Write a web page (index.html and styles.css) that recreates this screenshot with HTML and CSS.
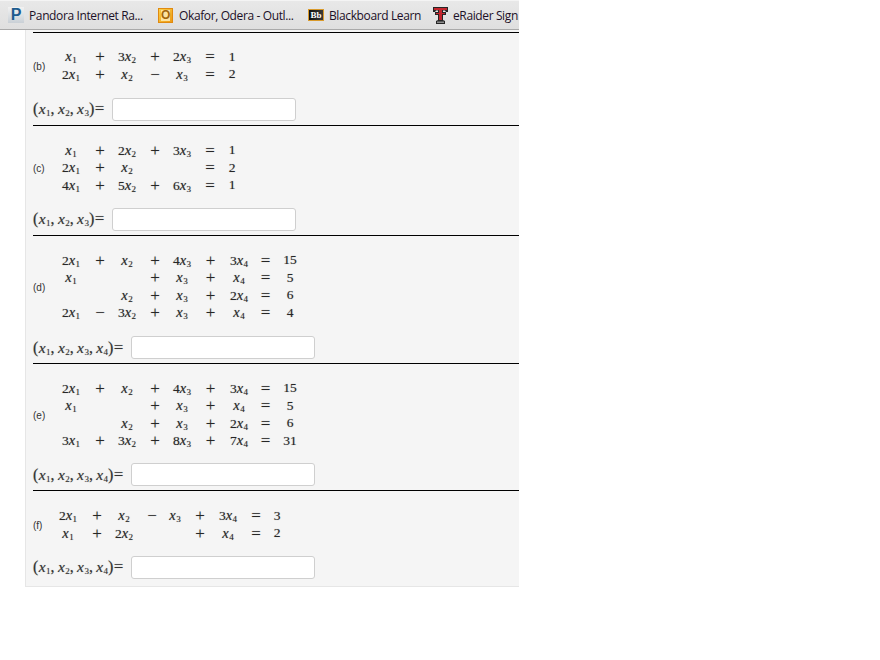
FILE: index.html
```html
<!DOCTYPE html>
<html lang="en">
<head>
<meta charset="utf-8">
<title>Linear systems</title>
<link rel="stylesheet" href="styles.css">
</head>
<body>
<div class="frame">
  <nav class="toolbar">
    <a class="bm bm-p"><span class="ico ico-p">P</span><span>Pandora Internet Ra...</span></a>
    <a class="bm bm-o"><span class="ico ico-o"><span>O</span></span><span>Okafor, Odera - Outl...</span></a>
    <a class="bm bm-b"><span class="ico ico-b">Bb</span><span>Blackboard Learn</span></a>
    <a class="bm bm-e"><svg class="ico-t" width="15" height="18" viewBox="0 0 15 18"><path d="M0 1h15v5h-2L12 4.500H10V6h3v3h-3v5l2 1v3H3v-3l2-1V9H2V6h3V4.500H3L2 6H0z" fill="#262626"/><path d="M1 2h13v2H1zM6 3h3v11H6zM3 7h9v1H3z" fill="#c4262e"/><path d="M4 15.500h7v1.500H4z" fill="#8d8d8d"/></svg><span>eRaider Sign</span></a>
  </nav>
  <main class="panel">
    <section class="q q-first">
      <div class="sys sys-b">
        <span class="lab">(b)</span>
        <div class="eqs">
          <i><var>x<sub>1</sub></var></i><i class="op">+</i><i>3<var>x<sub>2</sub></var></i><i class="op">+</i><i>2<var>x<sub>3</sub></var></i><i class="op">=</i><i>1</i>
          <i>2<var>x<sub>1</sub></var></i><i class="op">+</i><i><var>x<sub>2</sub></var></i><i class="op">−</i><i><var>x<sub>3</sub></var></i><i class="op">=</i><i>2</i>
        </div>
      </div>
      <div class="ans"><span class="tuple">(<var>x<sub>1</sub></var>,<var>x<sub>2</sub></var>,<var>x<sub>3</sub></var>)<b class="eq">=</b></span><input class="box" type="text"></div>
    </section>
    <section class="q q-c">
      <div class="sys sys-c">
        <span class="lab">(c)</span>
        <div class="eqs">
          <i><var>x<sub>1</sub></var></i><i class="op">+</i><i>2<var>x<sub>2</sub></var></i><i class="op">+</i><i>3<var>x<sub>3</sub></var></i><i class="op">=</i><i>1</i>
          <i>2<var>x<sub>1</sub></var></i><i class="op">+</i><i><var>x<sub>2</sub></var></i><i></i><i></i><i class="op">=</i><i>2</i>
          <i>4<var>x<sub>1</sub></var></i><i class="op">+</i><i>5<var>x<sub>2</sub></var></i><i class="op">+</i><i>6<var>x<sub>3</sub></var></i><i class="op">=</i><i>1</i>
        </div>
      </div>
      <div class="ans"><span class="tuple">(<var>x<sub>1</sub></var>,<var>x<sub>2</sub></var>,<var>x<sub>3</sub></var>)<b class="eq">=</b></span><input class="box" type="text"></div>
    </section>
    <section class="q">
      <div class="sys sys-d">
        <span class="lab">(d)</span>
        <div class="eqs">
          <i>2<var>x<sub>1</sub></var></i><i class="op">+</i><i><var>x<sub>2</sub></var></i><i class="op">+</i><i>4<var>x<sub>3</sub></var></i><i class="op">+</i><i>3<var>x<sub>4</sub></var></i><i class="op">=</i><i>15</i>
          <i><var>x<sub>1</sub></var></i><i></i><i></i><i class="op">+</i><i><var>x<sub>3</sub></var></i><i class="op">+</i><i><var>x<sub>4</sub></var></i><i class="op">=</i><i>5</i>
          <i></i><i></i><i><var>x<sub>2</sub></var></i><i class="op">+</i><i><var>x<sub>3</sub></var></i><i class="op">+</i><i>2<var>x<sub>4</sub></var></i><i class="op">=</i><i>6</i>
          <i>2<var>x<sub>1</sub></var></i><i class="op">−</i><i>3<var>x<sub>2</sub></var></i><i class="op">+</i><i><var>x<sub>3</sub></var></i><i class="op">+</i><i><var>x<sub>4</sub></var></i><i class="op">=</i><i>4</i>
        </div>
      </div>
      <div class="ans ans-4"><span class="tuple">(<var>x<sub>1</sub></var>,<var>x<sub>2</sub></var>,<var>x<sub>3</sub></var>,<var>x<sub>4</sub></var>)<b class="eq">=</b></span><input class="box" type="text"></div>
    </section>
    <section class="q q-e">
      <div class="sys sys-d">
        <span class="lab">(e)</span>
        <div class="eqs">
          <i>2<var>x<sub>1</sub></var></i><i class="op">+</i><i><var>x<sub>2</sub></var></i><i class="op">+</i><i>4<var>x<sub>3</sub></var></i><i class="op">+</i><i>3<var>x<sub>4</sub></var></i><i class="op">=</i><i>15</i>
          <i><var>x<sub>1</sub></var></i><i></i><i></i><i class="op">+</i><i><var>x<sub>3</sub></var></i><i class="op">+</i><i><var>x<sub>4</sub></var></i><i class="op">=</i><i>5</i>
          <i></i><i></i><i><var>x<sub>2</sub></var></i><i class="op">+</i><i><var>x<sub>3</sub></var></i><i class="op">+</i><i>2<var>x<sub>4</sub></var></i><i class="op">=</i><i>6</i>
          <i>3<var>x<sub>1</sub></var></i><i class="op">+</i><i>3<var>x<sub>2</sub></var></i><i class="op">+</i><i>8<var>x<sub>3</sub></var></i><i class="op">+</i><i>7<var>x<sub>4</sub></var></i><i class="op">=</i><i>31</i>
        </div>
      </div>
      <div class="ans ans-4"><span class="tuple">(<var>x<sub>1</sub></var>,<var>x<sub>2</sub></var>,<var>x<sub>3</sub></var>,<var>x<sub>4</sub></var>)<b class="eq">=</b></span><input class="box" type="text"></div>
    </section>
    <section class="q q-last">
      <div class="sys sys-f">
        <span class="lab">(f)</span>
        <div class="eqs">
          <i>2<var>x<sub>1</sub></var></i><i class="op">+</i><i><var>x<sub>2</sub></var></i><i class="op">−</i><i><var>x<sub>3</sub></var></i><i class="op">+</i><i>3<var>x<sub>4</sub></var></i><i class="op">=</i><i>3</i>
          <i><var>x<sub>1</sub></var></i><i class="op">+</i><i>2<var>x<sub>2</sub></var></i><i></i><i></i><i class="op">+</i><i><var>x<sub>4</sub></var></i><i class="op">=</i><i>2</i>
        </div>
      </div>
      <div class="ans ans-4"><span class="tuple">(<var>x<sub>1</sub></var>,<var>x<sub>2</sub></var>,<var>x<sub>3</sub></var>,<var>x<sub>4</sub></var>)<b class="eq">=</b></span><input class="box" type="text"></div>
    </section>
  </main>
</div>
</body>
</html>
```
FILE: styles.css
```css
html, body { margin: 0; padding: 0; background: #fff; }
.frame { width: 519px; height: 660px; overflow: hidden; }
.toolbar {
  height: 28px; display: flex; align-items: center;
  background: linear-gradient(#e8e8e8, #dfdfdf);
  border-top: 1px solid #f4f4f4; border-bottom: 1px solid #a9a9a9;
  font: 12px "Open Sans", sans-serif; letter-spacing: -.38px; color: #1c1028; white-space: nowrap; overflow: hidden;
}
.bm { display: flex; align-items: center; flex: none; }
.bm-p { width: 158px; padding-left: 8px; box-sizing: border-box; gap: 5px; }
.bm-o { width: 150px; gap: 6px; }
.bm-b { width: 125px; gap: 5px; }
.bm-e { gap: 5px; }
.ico { display: flex; align-items: center; justify-content: center; flex: none; letter-spacing: 0; font-weight: 700; }
.ico-p { width: 16px; height: 16px; font: 700 16px "Liberation Sans", sans-serif; color: #1d5c8f; background: linear-gradient(#f2f2f2, #c9d0d6); }
.ico-o { width: 15px; height: 15px; box-sizing: border-box; background: linear-gradient(135deg, #fbd04a, #ee9a14); border: 1px solid #e08a10; font: 700 12px "Liberation Sans", sans-serif; color: #a2660c; }
.ico-o span { background: #fde3a0; width: 9px; text-align: center; line-height: 11px; }
.ico-b { width: 16px; height: 12px; background: linear-gradient(90deg, #111, #3a3a3a); border: 1px solid #d99a2b; box-sizing: border-box; color: #fff; font: 700 9px "Liberation Serif", serif; }
.panel { margin-left: 25px; background: #f5f5f5; border-left: 1px solid #e6e6e6; border-bottom: 1px solid #e6e6e6; padding: 2px 0 0 7px; box-sizing: border-box; height: 557px; color: #262626; }
.q { border-top: 1px solid #000; padding: 16px 0 4px; }
.q-first { padding-top: 15px; }
.q-e { padding-top: 15.5px; }
.sys { display: flex; align-items: center; margin-bottom: 14.5px; }
.q-c .sys { margin-bottom: 13.5px; }
.q-e .sys { margin-bottom: 13.5px; }
.q-last .sys { margin-bottom: 13.5px; }
.lab { font: 10px "Liberation Sans", sans-serif; width: 24px; flex: none; color: #333; padding-top: 2px; }
.sys-f .lab { width: 20px; }
.eqs { display: grid; grid-auto-rows: 17.5px; align-items: center; font: 13.5px "Liberation Serif", serif; text-shadow: 0 0 1px rgba(0,0,0,.35); }
.eqs i { font-style: normal; text-align: center; white-space: nowrap; }
.eqs .op { font-size: 17px; line-height: 17px; }
var { font-family: "Liberation Serif", serif; font-style: italic; font-size: 14.5px; letter-spacing: .4px; }
sub { font-size: 9px; font-style: normal; vertical-align: -2px; line-height: 0; letter-spacing: 0; }
.sys-b .eqs, .sys-c .eqs { grid-template-columns: 28px 30px 24px 32px 22px 34px 10px; }
.sys-d .eqs { grid-template-columns: 28px 30px 24px 32px 22px 35px 22px 31px 18px; }
.sys-f .eqs { grid-template-columns: 30px 28px 26px 30px 16px 34px 22px 34px 8px; }
.ans { display: flex; align-items: center; }
.tuple { font: 16px "Liberation Serif", serif; letter-spacing: .4px; width: 79px; flex: none; white-space: nowrap; color: #333; text-shadow: 0 0 1px rgba(0,0,0,.35); }
.tuple var { font-size: 15.5px; }
.tuple var + var { margin-left: 3px; }
.eq { font-weight: 400; font-size: 17px; line-height: 15px; }
.ans-4 .tuple { width: 98px; }
.box { width: 184px; height: 23px; box-sizing: border-box; margin: 0; padding: 0; background: #fff; border: 1px solid #cfcfcf; border-radius: 3px; }
```
